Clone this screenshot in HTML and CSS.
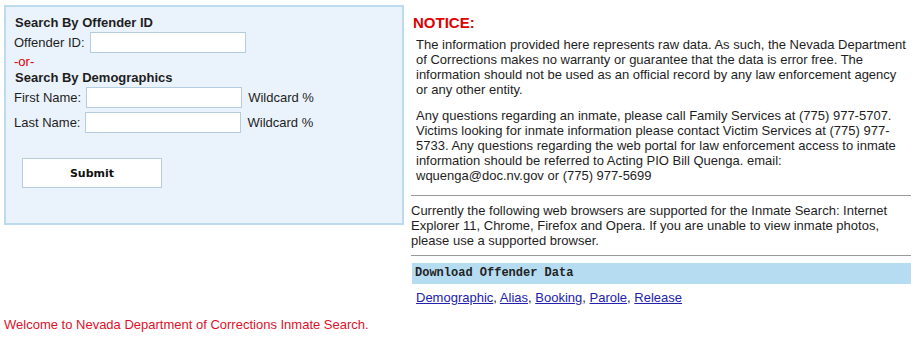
FILE: index.html
```html
<!DOCTYPE html>
<html>
<head>
<meta charset="utf-8">
<link rel="stylesheet" href="styles.css">
</head>
<body>
<div class="page">
  <div class="top">
    <div class="search-panel">
      <div class="heading">Search By Offender ID</div>
      <div class="row row-id">
        <label class="lbl">Offender ID:</label>
        <input class="field" type="text">
      </div>
      <div class="or">-or-</div>
      <div class="heading heading-demo">Search By Demographics</div>
      <div class="row row-name">
        <label class="lbl">First Name:</label>
        <input class="field" type="text">
        <span class="hint">Wildcard %</span>
      </div>
      <div class="row row-name">
        <label class="lbl">Last Name:</label>
        <input class="field" type="text">
        <span class="hint">Wildcard %</span>
      </div>
      <button class="submit" type="button">Submit</button>
    </div>
    <div class="info">
      <div class="notice-title">NOTICE:</div>
      <p class="notice-text">The information provided here represents raw data. As such, the Nevada Department of Corrections makes no warranty or guarantee that the data is error free. The information should not be used as an official record by any law enforcement agency or any other entity.</p>
      <p class="notice-text notice-last">Any questions regarding an inmate, please call Family Services at (775) 977-5707. Victims looking for inmate information please contact Victim Services at (775) 977-5733. Any questions regarding the web portal for law enforcement access to inmate information should be referred to Acting PIO Bill Quenga. email: wquenga@doc.nv.gov or (775) 977-5699</p>
      <hr class="rule">
      <p class="browsers">Currently the following web browsers are supported for the Inmate Search: Internet Explorer 11, Chrome, Firefox and Opera. If you are unable to view inmate photos, please use a supported browser.</p>
      <hr class="rule">
      <div class="download-bar">Download Offender Data</div>
      <div class="links"><a href="#">Demographic</a>, <a href="#">Alias</a>, <a href="#">Booking</a>, <a href="#">Parole</a>, <a href="#">Release</a></div>
    </div>
  </div>
  <div class="welcome">Welcome to Nevada Department of Corrections Inmate Search.</div>
</div>
</body>
</html>
```

FILE: styles.css
```css
* { box-sizing: border-box; }
body {
  margin: 0;
  font-family: "Liberation Sans", Arial, sans-serif;
  font-size: 13px;
  color: #1e1e1e;
  background: #fff;
}
.page {
  padding: 5px 0 0 4px;
}
.top {
  display: flex;
  align-items: flex-start;
  gap: 7px;
}
.search-panel {
  width: 400px;
  height: 220px;
  flex: none;
  background: #eaf3fb;
  border: 2px solid #bcdcee;
  padding: 8px 0 0 8px;
}
.heading {
  font-weight: bold;
  line-height: 15px;
  padding-left: 1px;
}
.heading-demo {
  margin-top: 1px;
}
.row {
  display: flex;
  align-items: center;
}
.row-id { height: 24px; }
.row-name { height: 25px; }
.lbl {
  line-height: 15px;
  margin-right: 5px;
}
.field {
  width: 156px;
  height: 21px;
  border: 1px solid #b5cde0;
  background: #fff;
  margin: 0;
  padding: 0 2px;
}
.hint {
  margin-left: 6px;
}
.or {
  color: #e00000;
  line-height: 15px;
}
.submit {
  display: block;
  margin: 23px 0 0 8px;
  width: 140px;
  height: 30px;
  background: #fff;
  border: 1px solid #b5cde0;
  font-family: "Comic Sans MS", "DejaVu Sans", sans-serif;
  font-weight: bold;
  font-size: 11px;
  color: #111;
}
.info {
  width: 500px;
  flex: none;
  padding-top: 9px;
}
.notice-title {
  color: #e00000;
  font-weight: bold;
  font-size: 15px;
  line-height: 17px;
  padding-left: 2px;
}
.notice-text {
  margin: 6px 0 11px 5px;
  line-height: 15px;
}
.notice-last {
  margin-top: 11px;
  margin-bottom: 12px;
}
.rule {
  margin: 0;
  border: 0;
  border-top: 1px solid #999;
  height: 0;
}
.browsers {
  margin: 7px 0 7px 0;
  line-height: 15px;
}
.download-bar {
  margin-top: 7px;
  margin-left: 1px;
  background: #b6dcf2;
  height: 21px;
  line-height: 21px;
  padding-left: 3px;
  font-family: "Liberation Mono", "DejaVu Sans Mono", monospace;
  font-weight: bold;
  font-size: 12px;
  color: #222;
}
.links {
  margin: 6px 0 0 5px;
  line-height: 15px;
}
.links a {
  color: #2222aa;
}
.welcome {
  color: #e0102a;
  font-size: 13px;
  margin-top: 12px;
  line-height: 15px;
}
```
